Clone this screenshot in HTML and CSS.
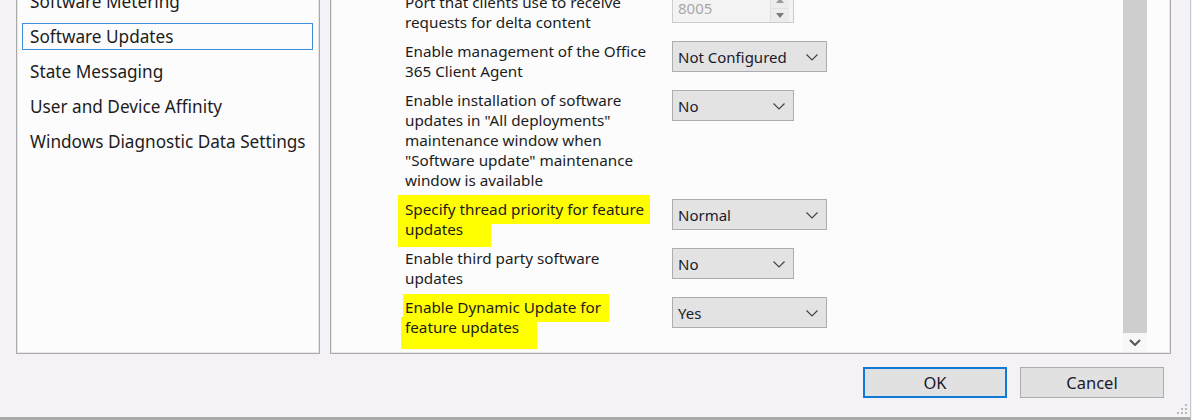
FILE: index.html
```html
<!DOCTYPE html>
<html>
<head>
<meta charset="utf-8">
<link rel="stylesheet" href="styles.css">
</head>
<body>
<div class="window">
  <div class="main">
    <div class="left-panel">
      <div class="item">Software Metering</div>
      <div class="item selected">Software Updates</div>
      <div class="item">State Messaging</div>
      <div class="item">User and Device Affinity</div>
      <div class="item">Windows Diagnostic Data Settings</div>
    </div>
    <div class="right-panel">
      <div class="rows">
        <div class="row">
          <div class="label">Port that clients use to receive<br>requests for delta content</div>
          <div class="spin">
            <span class="spin-val">8005</span>
            <span class="spin-btns">
              <span class="spin-btn"><svg width="8" height="5" viewBox="0 0 8 5"><path d="M0 5 L4 0 L8 5 Z" fill="#9a9a9a"/></svg></span>
              <span class="spin-btn"><svg width="8" height="5" viewBox="0 0 8 5"><path d="M0 0 L4 5 L8 0 Z" fill="#7a7a7a"/></svg></span>
            </span>
          </div>
        </div>
        <div class="row">
          <div class="label">Enable management of the Office<br>365 Client Agent</div>
          <div class="combo wide"><span>Not Configured</span><svg class="chev" width="12" height="7" viewBox="0 0 12 7"><path d="M0.5 0.5 L6 6 L11.5 0.5" fill="none" stroke="#444" stroke-width="1.2"/></svg></div>
        </div>
        <div class="row">
          <div class="label">Enable installation of software<br>updates in "All deployments"<br>maintenance window when<br>"Software update" maintenance<br>window is available</div>
          <div class="combo"><span>No</span><svg class="chev" width="12" height="7" viewBox="0 0 12 7"><path d="M0.5 0.5 L6 6 L11.5 0.5" fill="none" stroke="#444" stroke-width="1.2"/></svg></div>
        </div>
        <div class="row">
          <div class="label"><span class="hl h1a">Specify thread priority for feature</span><br><span class="hl h1b">updates</span></div>
          <div class="combo wide"><span>Normal</span><svg class="chev" width="12" height="7" viewBox="0 0 12 7"><path d="M0.5 0.5 L6 6 L11.5 0.5" fill="none" stroke="#444" stroke-width="1.2"/></svg></div>
        </div>
        <div class="row">
          <div class="label">Enable third party software<br>updates</div>
          <div class="combo"><span>No</span><svg class="chev" width="12" height="7" viewBox="0 0 12 7"><path d="M0.5 0.5 L6 6 L11.5 0.5" fill="none" stroke="#444" stroke-width="1.2"/></svg></div>
        </div>
        <div class="row">
          <div class="label"><span class="hl h2a">Enable Dynamic Update for</span><br><span class="hl h2b">feature updates</span></div>
          <div class="combo wide"><span>Yes</span><svg class="chev" width="12" height="7" viewBox="0 0 12 7"><path d="M0.5 0.5 L6 6 L11.5 0.5" fill="none" stroke="#444" stroke-width="1.2"/></svg></div>
        </div>
      </div>
      <div class="scrollbar">
        <div class="thumb"></div>
        <div class="arrow"><svg width="12" height="7" viewBox="0 0 12 7"><path d="M1 1 L6 6 L11 1" fill="none" stroke="#555" stroke-width="2"/></svg></div>
      </div>
    </div>
  </div>
  <div class="footer">
    <button class="btn ok">OK</button>
    <button class="btn">Cancel</button>
  </div>
  <svg class="grip" width="12" height="12" viewBox="0 0 12 12">
    <g fill="#b8b8b8">
      <rect x="9" y="1" width="2" height="2"/>
      <rect x="5" y="5" width="2" height="2"/><rect x="9" y="5" width="2" height="2"/>
      <rect x="1" y="9" width="2" height="2"/><rect x="5" y="9" width="2" height="2"/><rect x="9" y="9" width="2" height="2"/>
    </g>
  </svg>
</div>
</body>
</html>
```

FILE: styles.css
```css
html, body {
  margin: 0;
  padding: 0;
}
body {
  width: 1192px;
  height: 420px;
  overflow: hidden;
  background: #f4f2f6;
  font-family: "Noto Sans", "Open Sans", sans-serif;
  font-size: 15px;
  color: #1c1c1c;
}
.window {
  position: relative;
  display: flex;
  flex-direction: column;
  height: 417px;
  width: 1190px;
  border-right: 1px solid #c9c9c9;
  border-bottom: 3px solid #a9a9a9;
  box-sizing: content-box;
}
.main {
  display: flex;
  margin-top: -24px;
  height: 378px;
  flex: none;
}
.left-panel {
  margin-left: 16px;
  width: 304px;
  height: 378px;
  border: 1px solid #aaaaaa;
  box-shadow: inset 0 0 0 1px #e6e6e6;
  background: #fcfcfd;
  padding: 11px 6px 0 5px;
  box-sizing: border-box;
  display: flex;
  flex-direction: column;
  gap: 8px;
}
.item {
  height: 27px;
  line-height: 25px;
  padding-left: 7px;
  border: 1px solid transparent;
  box-sizing: border-box;
  white-space: nowrap;
  font-size: 17.2px;
}
.selected {
  border-color: #3c8ddc;
}
.right-panel {
  margin-left: 10px;
  width: 841px;
  height: 378px;
  border: 1px solid #aaaaaa;
  box-shadow: inset 0 0 0 1px #e6e6e6;
  background: #fcfcfd;
  box-sizing: border-box;
  display: flex;
}
.rows {
  flex: 1;
  padding-top: 15px;
  padding-left: 74px;
  display: flex;
  flex-direction: column;
  gap: 9px;
}
.row {
  display: grid;
  grid-template-columns: 267px auto;
  align-items: start;
}
.label {
  line-height: 20px;
  white-space: nowrap;
  font-size: 15.25px;
}
.hl {
  background: #ffff00;
}
.h1a { padding: 4px 6px 5px 7px; margin: 0 -6px 0 -7px; }
.h1b { padding: 0 28px 8px 7px; margin: 0 -28px 0 -7px; }
.h2a { padding: 3px 8px 5px 2px; margin: 0 -8px 0 -2px; }
.h2b { padding: 0 18px 12px 4px; margin: 0 -18px 0 -4px; }
.combo {
  width: 122px;
  height: 31px;
  box-sizing: border-box;
  border: 1px solid #adadad;
  background: #e3e3e3;
  display: flex;
  align-items: center;
  justify-content: space-between;
  padding: 0 8px 0 5px;
  font-size: 15px;
  color: #1a1a2a;
}
.combo.wide {
  width: 155px;
}
.chev {
  margin-top: 1px;
}
.spin {
  width: 122px;
  height: 31px;
  box-sizing: border-box;
  border: 1px solid #cccccc;
  background: #f3f3f3;
  display: flex;
  align-items: center;
  justify-content: space-between;
  padding: 0 4px 0 5px;
  font-size: 15px;
}
.spin-val {
  color: #a8a8a8;
}
.spin-btns {
  display: flex;
  flex-direction: column;
  height: 29px;
  width: 18px;
  border-left: 1px solid #e0e0e0;
}
.spin-btn {
  flex: 1;
  display: flex;
  align-items: center;
  justify-content: center;
  background: #ececec;
  border-top: 1px solid #e0e0e0;
}
.scrollbar {
  width: 24px;
  margin-right: 23px;
  display: flex;
  flex-direction: column;
  padding-bottom: 1px;
}
.thumb {
  flex: 1;
  background: #cdcecd;
}
.arrow {
  height: 19px;
  display: flex;
  align-items: center;
  justify-content: center;
  background: #f7f7f7;
}
.footer {
  display: flex;
  justify-content: flex-end;
  gap: 13px;
  padding-right: 26px;
  margin-top: 13px;
}
.btn {
  width: 144px;
  height: 31px;
  border: 1px solid #adadad;
  background: #e1e1e1;
  font-family: "Noto Sans", "Open Sans", sans-serif;
  font-size: 16.5px;
  color: #1a1a2a;
  padding: 0;
}
.btn.ok {
  border: 2px solid #0f7ad8;
}
.grip {
  position: absolute;
  right: 2px;
  bottom: 2px;
}
```
